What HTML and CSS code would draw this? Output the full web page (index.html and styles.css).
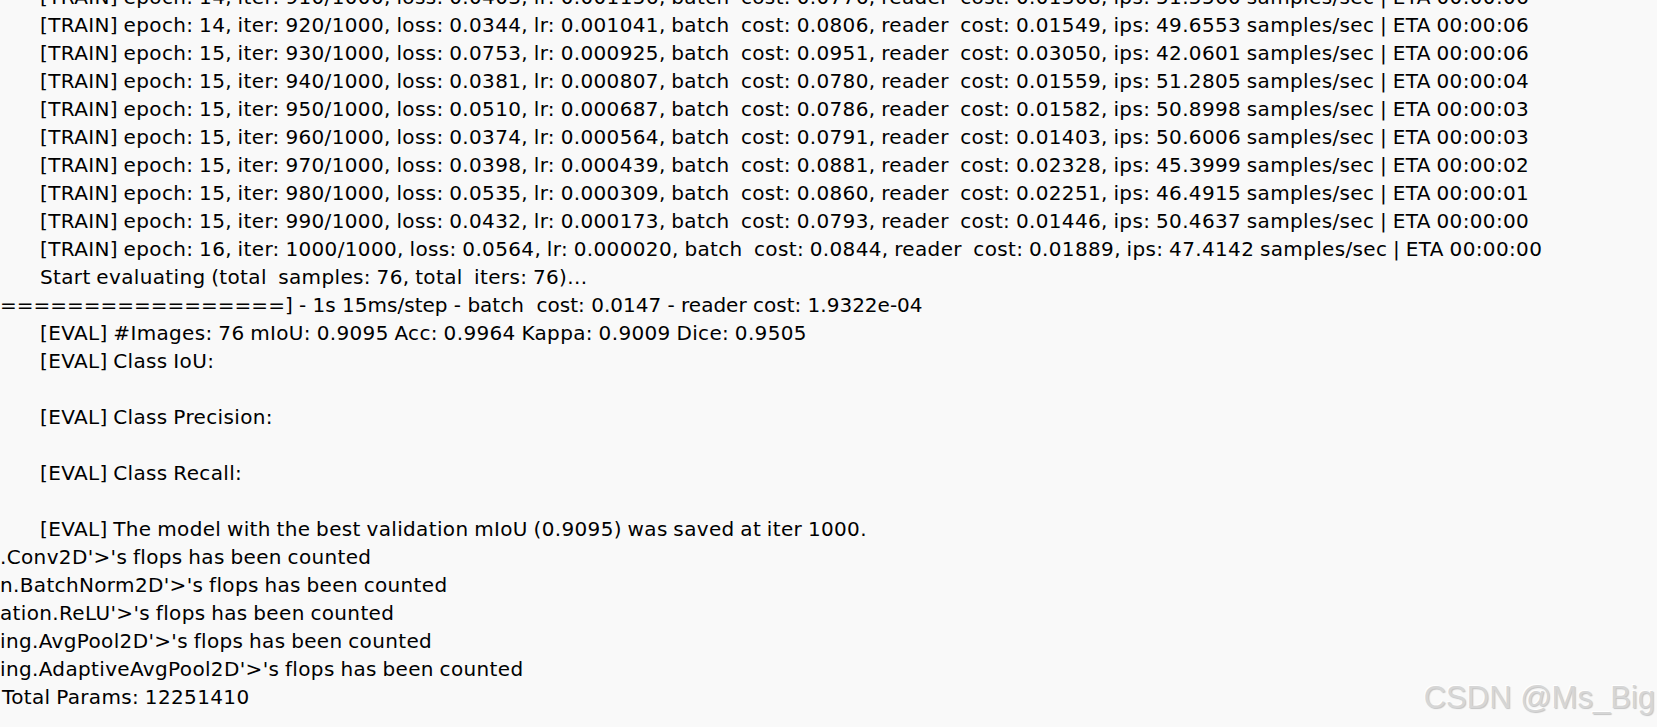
FILE: index.html
```html
<!DOCTYPE html>
<html lang="en">
<head>
<meta charset="utf-8">
<title>Training log</title>
<link rel="stylesheet" href="styles.css">
</head>
<body>
<div class="screen">
  <div class="log">
    <div class="ln in">[TRAIN] epoch: 14, iter: 910/1000, loss: 0.0403, lr: 0.001156, batch  cost: 0.0776, reader  cost: 0.01308, ips: 51.5560 samples/sec | ETA 00:00:06</div>
    <div class="ln in">[TRAIN] epoch: 14, iter: 920/1000, loss: 0.0344, lr: 0.001041, batch  cost: 0.0806, reader  cost: 0.01549, ips: 49.6553 samples/sec | ETA 00:00:06</div>
    <div class="ln in">[TRAIN] epoch: 15, iter: 930/1000, loss: 0.0753, lr: 0.000925, batch  cost: 0.0951, reader  cost: 0.03050, ips: 42.0601 samples/sec | ETA 00:00:06</div>
    <div class="ln in">[TRAIN] epoch: 15, iter: 940/1000, loss: 0.0381, lr: 0.000807, batch  cost: 0.0780, reader  cost: 0.01559, ips: 51.2805 samples/sec | ETA 00:00:04</div>
    <div class="ln in">[TRAIN] epoch: 15, iter: 950/1000, loss: 0.0510, lr: 0.000687, batch  cost: 0.0786, reader  cost: 0.01582, ips: 50.8998 samples/sec | ETA 00:00:03</div>
    <div class="ln in">[TRAIN] epoch: 15, iter: 960/1000, loss: 0.0374, lr: 0.000564, batch  cost: 0.0791, reader  cost: 0.01403, ips: 50.6006 samples/sec | ETA 00:00:03</div>
    <div class="ln in">[TRAIN] epoch: 15, iter: 970/1000, loss: 0.0398, lr: 0.000439, batch  cost: 0.0881, reader  cost: 0.02328, ips: 45.3999 samples/sec | ETA 00:00:02</div>
    <div class="ln in">[TRAIN] epoch: 15, iter: 980/1000, loss: 0.0535, lr: 0.000309, batch  cost: 0.0860, reader  cost: 0.02251, ips: 46.4915 samples/sec | ETA 00:00:01</div>
    <div class="ln in">[TRAIN] epoch: 15, iter: 990/1000, loss: 0.0432, lr: 0.000173, batch  cost: 0.0793, reader  cost: 0.01446, ips: 50.4637 samples/sec | ETA 00:00:00</div>
    <div class="ln in">[TRAIN] epoch: 16, iter: 1000/1000, loss: 0.0564, lr: 0.000020, batch  cost: 0.0844, reader  cost: 0.01889, ips: 47.4142 samples/sec | ETA 00:00:00</div>
    <div class="ln in">Start evaluating (total  samples: 76, total  iters: 76)...</div>
    <div class="ln bar">=================] - 1s 15ms/step - batch  cost: 0.0147 - reader cost: 1.9322e-04</div>
    <div class="ln in">[EVAL] #Images: 76 mIoU: 0.9095 Acc: 0.9964 Kappa: 0.9009 Dice: 0.9505</div>
    <div class="ln in">[EVAL] Class IoU:</div>
    <div class="ln blank"></div>
    <div class="ln in">[EVAL] Class Precision:</div>
    <div class="ln blank"></div>
    <div class="ln in">[EVAL] Class Recall:</div>
    <div class="ln blank"></div>
    <div class="ln in">[EVAL] The model with the best validation mIoU (0.9095) was saved at iter 1000.</div>
    <div class="ln cut">.Conv2D'&gt;'s flops has been counted</div>
    <div class="ln cut">n.BatchNorm2D'&gt;'s flops has been counted</div>
    <div class="ln cut">ation.ReLU'&gt;'s flops has been counted</div>
    <div class="ln cut">ing.AvgPool2D'&gt;'s flops has been counted</div>
    <div class="ln cut">ing.AdaptiveAvgPool2D'&gt;'s flops has been counted</div>
    <div class="ln total">Total Params: 12251410</div>
  </div>
  <div class="watermark">CSDN @Ms_Big</div>
</div>
</body>
</html>
```

FILE: styles.css
```css
html, body {
  margin: 0;
  padding: 0;
  background: #f9f9f9;
  overflow: hidden;
}

.screen {
  position: relative;
  width: 1657px;
  height: 727px;
  overflow: hidden;
  background: #f9f9f9;
}

.log {
  display: flex;
  flex-direction: column;
  margin-top: -17px;
  font-family: "DejaVu Sans", "Noto Sans", sans-serif;
  font-size: 20px;
  letter-spacing: 0.35px;
  word-spacing: -1px;
  color: #000;
}

.ln {
  height: 28px;
  line-height: 28px;
  white-space: pre;
}

.in {
  padding-left: 40px;
}

.bar {
  padding-left: 0;
  letter-spacing: 0;
  word-spacing: 0;
}

.cut {
  padding-left: 0;
}

.total {
  padding-left: 2px;
}

.watermark {
  position: absolute;
  right: 2px;
  bottom: 14px;
  font-family: "Liberation Sans", Arial, sans-serif;
  font-size: 31px;
  color: #d6d6d6;
  text-shadow: 1px 1px 1px #c4c4c4, -1px -1px 0 #ffffff;
  line-height: 1;
  letter-spacing: 0;
  word-spacing: 0;
}
```
